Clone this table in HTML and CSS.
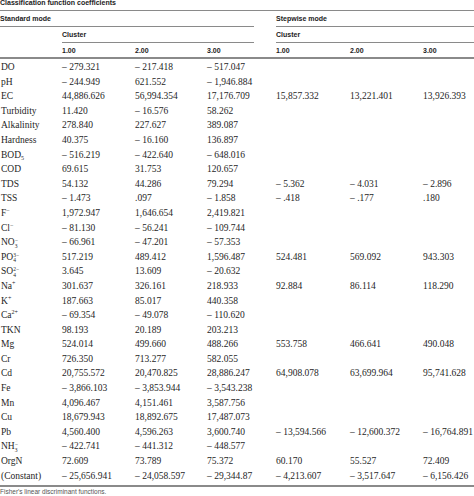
FILE: index.html
```html
<!DOCTYPE html>
<html>
<head>
<meta charset="utf-8">
<link rel="stylesheet" href="styles.css">
</head>
<body>
<div class="title">Classification function coefficients</div>
<table class="coef">
<colgroup>
<col class="c-label"><col class="c-a"><col class="c-b"><col class="c-c"><col class="c-sp"><col class="c-d"><col class="c-e"><col class="c-f">
</colgroup>
<thead>
<tr class="mode-row"><th colspan="4" class="grp">Standard mode</th><th class="sp"></th><th colspan="3" class="grp">Stepwise mode</th></tr>
<tr class="cluster-row"><th></th><th colspan="3" class="grp">Cluster</th><th class="sp"></th><th colspan="3" class="grp">Cluster</th></tr>
<tr class="num-row"><th></th><th>1.00</th><th>2.00</th><th>3.00</th><th></th><th>1.00</th><th>2.00</th><th>3.00</th></tr>
</thead>
<tbody>
<tr class="first"><td>DO</td><td>– 279.321</td><td>– 217.418</td><td>– 517.047</td><td></td><td></td><td></td><td></td></tr>
<tr><td>pH</td><td>– 244.949</td><td>621.552</td><td>– 1,946.884</td><td></td><td></td><td></td><td></td></tr>
<tr><td>EC</td><td>44,886.626</td><td>56,994.354</td><td>17,176.709</td><td></td><td>15,857.332</td><td>13,221.401</td><td>13,926.393</td></tr>
<tr><td>Turbidity</td><td>11.420</td><td>– 16.576</td><td>58.262</td><td></td><td></td><td></td><td></td></tr>
<tr><td>Alkalinity</td><td>278.840</td><td>227.627</td><td>389.087</td><td></td><td></td><td></td><td></td></tr>
<tr><td>Hardness</td><td>40.375</td><td>– 16.160</td><td>136.897</td><td></td><td></td><td></td><td></td></tr>
<tr><td>BOD<sub class="sb">5</sub></td><td>– 516.219</td><td>– 422.640</td><td>– 648.016</td><td></td><td></td><td></td><td></td></tr>
<tr><td>COD</td><td>69.615</td><td>31.753</td><td>120.657</td><td></td><td></td><td></td><td></td></tr>
<tr><td>TDS</td><td>54.132</td><td>44.286</td><td>79.294</td><td></td><td>– 5.362</td><td>– 4.031</td><td>– 2.896</td></tr>
<tr><td>TSS</td><td>– 1.473</td><td>.097</td><td>– 1.858</td><td></td><td>– .418</td><td>– .177</td><td>.180</td></tr>
<tr><td>F<sup class="sp-up">−</sup></td><td>1,972.947</td><td>1,646.654</td><td>2,419.821</td><td></td><td></td><td></td><td></td></tr>
<tr><td>Cl<sup class="sp-up">−</sup></td><td>– 81.130</td><td>– 56.241</td><td>– 109.744</td><td></td><td></td><td></td><td></td></tr>
<tr><td>NO<span class="ss"><span>−</span><span>3</span></span></td><td>– 66.961</td><td>– 47.201</td><td>– 57.353</td><td></td><td></td><td></td><td></td></tr>
<tr><td>PO<span class="ss"><span>3−</span><span>4</span></span></td><td>517.219</td><td>489.412</td><td>1,596.487</td><td></td><td>524.481</td><td>569.092</td><td>943.303</td></tr>
<tr><td>SO<span class="ss"><span>2−</span><span>4</span></span></td><td>3.645</td><td>13.609</td><td>– 20.632</td><td></td><td></td><td></td><td></td></tr>
<tr><td>Na<sup class="sp-up">+</sup></td><td>301.637</td><td>326.161</td><td>218.933</td><td></td><td>92.884</td><td>86.114</td><td>118.290</td></tr>
<tr><td>K<sup class="sp-up">+</sup></td><td>187.663</td><td>85.017</td><td>440.358</td><td></td><td></td><td></td><td></td></tr>
<tr><td>Ca<sup class="sp-up">2+</sup></td><td>– 69.354</td><td>– 49.078</td><td>– 110.620</td><td></td><td></td><td></td><td></td></tr>
<tr><td>TKN</td><td>98.193</td><td>20.189</td><td>203.213</td><td></td><td></td><td></td><td></td></tr>
<tr><td>Mg</td><td>524.014</td><td>499.660</td><td>488.266</td><td></td><td>553.758</td><td>466.641</td><td>490.048</td></tr>
<tr><td>Cr</td><td>726.350</td><td>713.277</td><td>582.055</td><td></td><td></td><td></td><td></td></tr>
<tr><td>Cd</td><td>20,755.572</td><td>20,470.825</td><td>28,886.247</td><td></td><td>64,908.078</td><td>63,699.964</td><td>95,741.628</td></tr>
<tr><td>Fe</td><td>– 3,866.103</td><td>– 3,853.944</td><td>– 3,543.238</td><td></td><td></td><td></td><td></td></tr>
<tr><td>Mn</td><td>4,096.467</td><td>4,151.461</td><td>3,587.756</td><td></td><td></td><td></td><td></td></tr>
<tr><td>Cu</td><td>18,679.943</td><td>18,892.675</td><td>17,487.073</td><td></td><td></td><td></td><td></td></tr>
<tr><td>Pb</td><td>4,560.400</td><td>4,596.263</td><td>3,600.740</td><td></td><td>– 13,594.566</td><td>– 12,600.372</td><td>– 16,764.891</td></tr>
<tr><td>NH<span class="ss"><span>−</span><span>3</span></span></td><td>– 422.741</td><td>– 441.312</td><td>– 448.577</td><td></td><td></td><td></td><td></td></tr>
<tr><td>OrgN</td><td>72.609</td><td>73.789</td><td>75.372</td><td></td><td>60.170</td><td>55.527</td><td>72.409</td></tr>
<tr class="last"><td>(Constant)</td><td>– 25,656.941</td><td>– 24,058.597</td><td>– 29,344.87</td><td></td><td>– 4,213.607</td><td>– 3,517.647</td><td>– 6,156.426</td></tr>
</tbody>
</table>
<div class="note">Fisher's linear discriminant functions.</div>
</body>
</html>
```

FILE: styles.css
```css
html, body {
  margin: 0;
  padding: 0;
  background: #ffffff;
}
body {
  width: 474px;
  overflow-x: hidden;
  color: #1e1e1e;
}
.title {
  height: 10px;
  font-family: "Liberation Sans", Arial, sans-serif;
  font-weight: bold;
  font-size: 7px;
  line-height: 6px;
  white-space: nowrap;
  color: #222;
}
.coef {
  width: 474px;
  table-layout: fixed;
  border-collapse: separate;
  border-spacing: 0;
  border-top: 1.5px solid #8a8a8a;
}
.c-label { width: 62px; }
.c-a { width: 73px; }
.c-b { width: 72px; }
.c-c { width: 47px; }
.c-sp { width: 22px; }
.c-d { width: 74px; }
.c-e { width: 73px; }
.c-f { width: 51px; }

.coef th {
  font-family: "Liberation Sans", Arial, sans-serif;
  font-weight: bold;
  font-size: 7px;
  text-align: left;
  padding: 0;
  white-space: nowrap;
  color: #222;
  vertical-align: middle;
}
.mode-row th, .cluster-row th {
  height: 15px;
}
.mode-row th.grp, .cluster-row th.grp {
  border-bottom: 1px solid #8a8a8a;
}
.num-row th {
  height: 14px;
  border-bottom: 2px solid #8a8a8a;
}
.coef td {
  font-family: "Liberation Serif", "Times New Roman", serif;
  font-size: 9.5px;
  height: 14.6px;
  line-height: 14.6px;
  padding: 0;
  white-space: nowrap;
  overflow: visible;
  vertical-align: middle;
}
.coef td:first-child {
  padding-left: 1px;
}
.coef tr.first td {
  padding-top: 1px;
}
.coef tr.last td {
  padding-bottom: 2px;
  border-bottom: 2px solid #8a8a8a;
}
.sb {
  font-size: 6px;
  line-height: 0;
  vertical-align: -2px;
}
.sp-up {
  font-size: 6px;
  line-height: 0;
  vertical-align: 4px;
}
.ss {
  display: inline-flex;
  flex-direction: column;
  font-size: 5.5px;
  line-height: 5.5px;
  height: 11px;
  vertical-align: 3px;
}
.note {
  font-family: "Liberation Sans", Arial, sans-serif;
  font-size: 6.5px;
  line-height: 7px;
  color: #555;
  padding-top: 1px;
  white-space: nowrap;
}
```
